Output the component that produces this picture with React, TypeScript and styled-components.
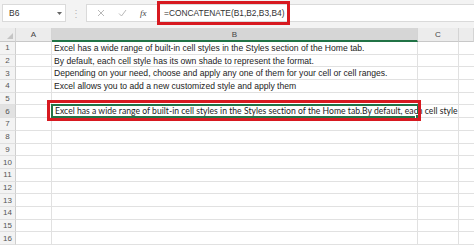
import React from 'react';
import styled, { createGlobalStyle } from 'styled-components';

const GlobalStyle = createGlobalStyle`
  html, body {
    margin: 0;
    padding: 0;
    background: #ffffff;
  }
  body {
    font-family: 'Liberation Sans', Arial, sans-serif;
  }
`;

const ROW_H = 12.7;
const COLS = '16px 36px 366px 41px 1fr';

const Sheet = styled.div`
  width: 474px;
  height: 245px;
  overflow: hidden;
  background: #ffffff;
`;

const FormulaBar = styled.div`
  height: 28px;
  box-sizing: border-box;
  padding: 4px 0 6px 2px;
  background: #f3f3f3;
  display: flex;
  align-items: center;
`;

const NameBox = styled.div`
  width: 64px;
  height: 18px;
  box-sizing: border-box;
  background: #ffffff;
  border: 1px solid #dadada;
  display: flex;
  align-items: center;
  justify-content: space-between;
  padding: 0 3px 0 6px;
  font-size: 8.5px;
  color: #333;
`;

const Dots = styled.div`
  width: 20px;
  display: flex;
  justify-content: center;
  color: #b5b5b5;
  font-size: 10px;
`;

const FuncBox = styled.div`
  width: 69px;
  height: 18px;
  box-sizing: border-box;
  background: #ffffff;
  border: 1px solid #dadada;
  border-right: none;
  display: flex;
  align-items: center;
  justify-content: space-around;
  padding: 0 2px 0 4px;
`;

const Fx = styled.span`
  font-family: 'Liberation Serif', 'Times New Roman', serif;
  font-style: italic;
  font-size: 9px;
  color: #444;
`;

const FormulaInput = styled.div`
  flex: 1;
  height: 18px;
  box-sizing: border-box;
  background: #ffffff;
  border-top: 1px solid #dadada;
  border-bottom: 1px solid #dadada;
  display: flex;
  align-items: center;
  padding-left: 2px;
`;

const Highlight = styled.span`
  height: 24px;
  box-sizing: border-box;
  border: 3px solid #d71920;
  display: inline-flex;
  align-items: center;
  padding: 0 3px 0 4px;
  font-size: 8.4px;
  color: #333;
`;

const Grid = styled.div`
  display: grid;
  grid-template-columns: ${COLS};
  grid-auto-rows: ${ROW_H}px;
`;

const Corner = styled.div`
  height: 14px;
  background: #ececec;
  border-right: 1px solid #d4d4d4;
  border-bottom: 1px solid #c8c8c8;
  box-sizing: border-box;
  position: relative;
  &::after {
    content: '';
    position: absolute;
    right: 2px;
    bottom: 2px;
    border-left: 6px solid transparent;
    border-bottom: 6px solid #c4c4c4;
  }
`;

const ColHead = styled.div<{ $active?: boolean }>`
  height: 14px;
  box-sizing: border-box;
  background: ${(p) => (p.$active ? '#d6d6d6' : '#ececec')};
  border-right: 1px solid #d4d4d4;
  border-bottom: ${(p) => (p.$active ? '2px solid #217346' : '1px solid #c8c8c8')};
  display: flex;
  align-items: center;
  justify-content: center;
  font-size: 8px;
  color: #444;
`;

const RowHead = styled.div<{ $active?: boolean }>`
  box-sizing: border-box;
  background: ${(p) => (p.$active ? '#e2e2e2' : '#f3f3f3')};
  border-right: 1px solid #cfcfcf;
  border-bottom: 1px solid #e0e0e0;
  display: flex;
  align-items: center;
  justify-content: center;
  font-size: 8px;
  color: #555;
`;

const Cell = styled.div<{ $open?: boolean }>`
  box-sizing: border-box;
  border-right: ${(p) => (p.$open ? 'none' : '1px solid #e1e1e1')};
  border-bottom: 1px solid #e1e1e1;
  display: flex;
  align-items: center;
  padding-left: 2px;
  white-space: nowrap;
  overflow: visible;
  font-size: 8.6px;
  color: #222;
  position: relative;
`;

const WideText = styled.span`
  font-family: Lato, 'Noto Sans', sans-serif;
  font-size: 8.6px;
  letter-spacing: 0.02px;
  color: #222;
  padding-left: 1px;
  position: relative;
  z-index: 1;
`;

const Selection = styled.div`
  position: absolute;
  left: -1px;
  right: -1px;
  top: -1px;
  bottom: -1px;
  border: 2px solid #217346;
  z-index: 2;
  &::after {
    content: '';
    position: absolute;
    right: -4px;
    bottom: -4px;
    width: 4px;
    height: 4px;
    background: #217346;
    border: 1px solid #fff;
  }
`;

const RedFrame = styled.div`
  position: absolute;
  left: -5px;
  right: -3px;
  top: -5px;
  bottom: -4px;
  border: 3px solid #d71920;
  z-index: 3;
`;

const lines = [
  'Excel has a wide range of built-in cell styles in the Styles section of the Home tab.',
  'By default, each cell style has its own shade to represent the format.',
  'Depending on your need, choose and apply any one of them for your cell or cell ranges.',
  'Excel allows you to add a new customized style and apply them',
  '',
];

const combined =
  'Excel has a wide range of built-in cell styles in the Styles section of the Home tab.By default, each cell style';

function CrossIcon() {
  return (
    <svg width="8" height="8" viewBox="0 0 8 8">
      <path d="M1 1 L7 7 M7 1 L1 7" stroke="#b0b0b0" strokeWidth="0.9" fill="none" />
    </svg>
  );
}

function CheckIcon() {
  return (
    <svg width="9" height="8" viewBox="0 0 9 8">
      <path d="M1 4.5 L3.5 7 L8 1" stroke="#b0b0b0" strokeWidth="0.9" fill="none" />
    </svg>
  );
}

function Caret() {
  return (
    <svg width="5" height="3" viewBox="0 0 5 3">
      <path d="M0 0 L5 0 L2.5 3 Z" fill="#666" />
    </svg>
  );
}

function App() {
  const emptyRows = Array.from({ length: 10 }, (_, i) => i + 7);
  return (
    <>
      <GlobalStyle />
      <Sheet>
        <FormulaBar>
          <NameBox>
            <span>B6</span>
            <Caret />
          </NameBox>
          <Dots>⋮</Dots>
          <FuncBox>
            <CrossIcon />
            <CheckIcon />
            <Fx>fx</Fx>
          </FuncBox>
          <FormulaInput>
            <Highlight>=CONCATENATE(B1,B2,B3,B4)</Highlight>
          </FormulaInput>
        </FormulaBar>
        <Grid style={{ gridTemplateRows: `14px repeat(16, ${ROW_H}px)` }}>
          <Corner />
          <ColHead>A</ColHead>
          <ColHead $active>B</ColHead>
          <ColHead>C</ColHead>
          <ColHead />

          {lines.map((text, i) => (
            <React.Fragment key={i}>
              <RowHead>{i + 1}</RowHead>
              <Cell />
              <Cell>{text}</Cell>
              <Cell />
              <Cell $open />
            </React.Fragment>
          ))}

          <RowHead $active>6</RowHead>
          <Cell />
          <Cell $open>
            <WideText>{combined}</WideText>
            <Selection />
            <RedFrame />
          </Cell>
          <Cell />
          <Cell $open />

          {emptyRows.map((n) => (
            <React.Fragment key={n}>
              <RowHead>{n}</RowHead>
              <Cell />
              <Cell />
              <Cell />
              <Cell $open />
            </React.Fragment>
          ))}
        </Grid>
      </Sheet>
    </>
  );
}

export default App;
